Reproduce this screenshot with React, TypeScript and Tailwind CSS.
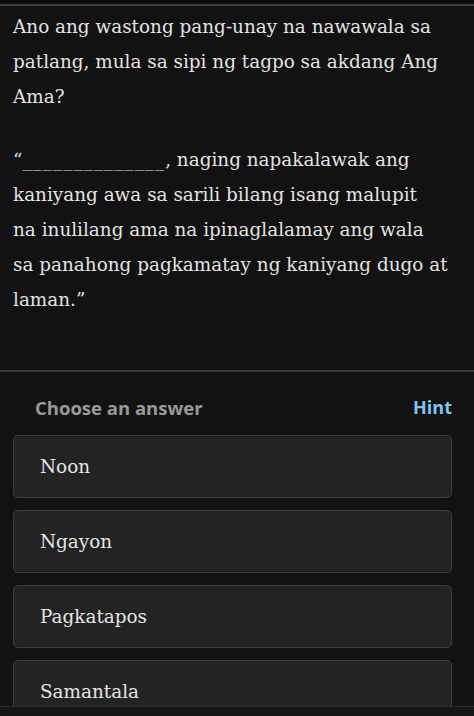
const serif = { fontFamily: '"DejaVu Serif", "Liberation Serif", serif' }

const answers = ['Noon', 'Ngayon', 'Pagkatapos', 'Samantala']

export default function App() {
  return (
    <div className="w-[474px] h-[716px] overflow-hidden bg-[#121212] flex flex-col relative">
      <div className="h-[4px] shrink-0 bg-[#0b0b0b]" />
      <div className="h-[2px] shrink-0 bg-[#3c3c3c]" />

      {/* Question */}
      <div className="shrink-0 px-[13px] pt-[3px] text-[#e4e4e4] text-[18.4px] leading-[35px] whitespace-nowrap" style={serif}>
        <p>
          Ano ang wastong pang-unay na nawawala sa<br />
          patlang, mula sa sipi ng tagpo sa akdang Ang<br />
          Ama?
        </p>
        <p className="mt-[28px]">
          “<span className="tracking-[1px]">______________</span>, naging napakalawak ang<br />
          kaniyang awa sa sarili bilang isang malupit<br />
          na inulilang ama na ipinaglalamay ang wala<br />
          sa panahong pagkamatay ng kaniyang dugo at<br />
          laman.”
        </p>
      </div>

      <div className="h-[2px] shrink-0 bg-[#3a3a3a] mt-[53px]" />

      {/* Answers */}
      <div
        className="shrink-0 flex items-center justify-between pl-[35px] pr-[22px] pt-[23px] pb-[15px] leading-[25px]"
        style={{ fontFamily: '"Open Sans", "Noto Sans", sans-serif' }}
      >
        <span className="text-[18.5px] font-bold text-[#9a9a9a]">Choose an answer</span>
        <span className="text-[18px] font-bold text-[#7ec8ee]">Hint</span>
      </div>

      <div className="flex flex-col gap-[12px] pl-[13px] pr-[22px]">
        {answers.map((a) => (
          <div
            key={a}
            className="h-[63px] shrink-0 flex items-center px-[26px] rounded-[5px] bg-[#232323] border border-[#3d3d3d] text-[#e6e6e6] text-[18.4px]"
            style={serif}
          >
            {a}
          </div>
        ))}
      </div>

      <div className="absolute left-0 right-0 bottom-0 h-[10px] bg-[#161616] border-t border-[#2c2c2c]" />
    </div>
  )
}
